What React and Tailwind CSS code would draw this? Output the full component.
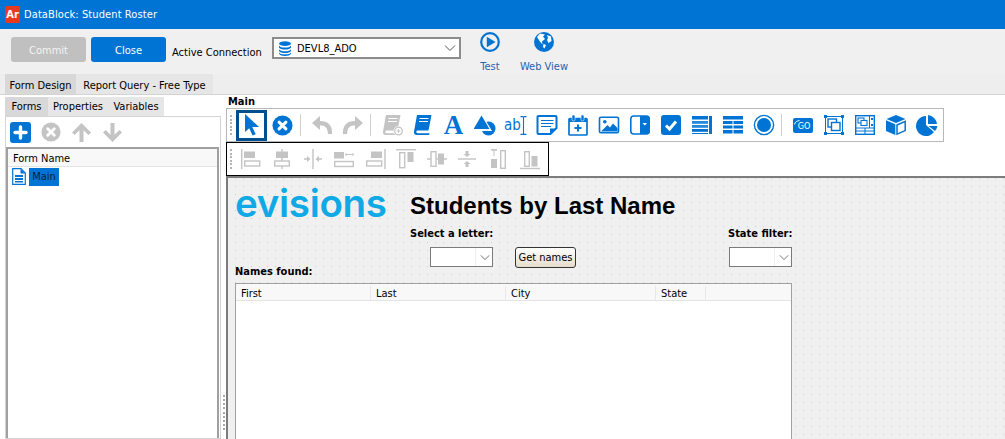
import React from "react";

const BLUE = "#0074d4";
const GRAY = "#c4c4c4";

const Svg = ({ children, size = 22, vb = 22, color = BLUE }) => (
  <svg width={size} height={size} viewBox={`0 0 ${vb} ${vb}`} fill={color} style={{ color }} className="block shrink-0">
    {children}
  </svg>
);

const Db = () => (
  <svg width="12" height="15" viewBox="0 0 12 15" fill={BLUE} className="block">
    <ellipse cx="6" cy="2.6" rx="6" ry="2.4" />
    <path d="M0 4.4C1 6 3 6.6 6 6.6S11 6 12 4.4V6.6C11 8 9 8.6 6 8.6S1 8 0 6.6Z" />
    <path d="M0 8.2C1 9.6 3 10.2 6 10.2S11 9.6 12 8.2V10C11 11.4 9 12 6 12S1 11.4 0 10Z" />
    <path d="M0 11.4C1 12.8 3 13.3 6 13.3S11 12.8 12 11.4V12.8C11 14.2 9 15 6 15S1 14.2 0 12.8Z" />
  </svg>
);

const Chevron = ({ w = 12, h = 6, c = "#555" }) => (
  <svg width={w} height={h} viewBox="0 0 12 6" fill="none" stroke={c} strokeWidth="1" className="block">
    <path d="M1 0.5L6 5.5L11 0.5" />
  </svg>
);

const Grip = () => (
  <div className="flex h-[20px] w-[2px] shrink-0 flex-col justify-between">
    {[0, 1, 2, 3, 4, 5].map((i) => (
      <span key={i} className="block h-[2px] w-[2px] bg-[#b4b4b4]" />
    ))}
  </div>
);

const Sep = () => (
  <div className="flex h-full w-[8px] shrink-0 items-center pl-[2px]">
    <span className="block h-[22px] w-px bg-[#d0d0d0]" />
  </div>
);

const Btn = ({ children, active }) => (
  <div className={`flex h-[31px] w-[31px] shrink-0 items-center justify-center ${active ? "border-[3px] border-[#00508f]" : ""}`}>
    {children}
  </div>
);

const XCircle = ({ color = BLUE, s = 21 }) => (
  <Svg size={s} color={color}>
    <circle cx="11" cy="11" r="10.5" />
    <path d="M7.4 7.4L14.6 14.6M14.6 7.4L7.4 14.6" stroke="#fff" strokeWidth="3.2" strokeLinecap="round" />
  </Svg>
);

const Undo = ({ flip }) => (
  <svg width="22" height="20" viewBox="0 0 22 20" fill={GRAY} className="block" style={flip ? { transform: "scaleX(-1)" } : undefined}>
    <path d="M9 1L1 8L9 15V10.5C14 10.5 16.5 12 17 19H21C21.5 10 17 6 9 6Z" />
  </svg>
);

const Book = ({ color = BLUE, plus }) => (
  <Svg color={color} size={22}>
    <path d="M5 1H19.5L16.5 16.5H6C5 16.5 4.4 17 4.3 17.8C4.2 18.7 4.8 19.2 6 19.2H17.5L17.2 21H5C2.6 21 1.6 19.6 2 17.5Z" />
    <path d="M7.5 4.5H16.5M7 7.5H16" stroke="#fff" strokeWidth="1.2" fill="none" />
    {plus && (
      <>
        <circle cx="17.5" cy="17" r="5" fill="#fff" />
        <circle cx="17.5" cy="17" r="3.8" fill="none" stroke={color} strokeWidth="1.3" />
        <path d="M15.7 17H19.3M17.5 15.2V18.8" stroke={color} strokeWidth="1.1" />
      </>
    )}
  </Svg>
);

const Shapes = () => (
  <Svg>
    <circle cx="14.5" cy="14.5" r="7" />
    <path d="M7.5 -0.5L18 17H-3Z" fill="#fff" />
    <path d="M7.5 1.5L15.5 15H-.5Z" />
  </Svg>
);

const AbBeam = () => (
  <div className="flex items-center pt-px">
    <span className="text-[15px] leading-none text-[#0074d4]">ab</span>
    <svg width="7" height="19" viewBox="0 0 7 19" fill="none" stroke={BLUE} strokeWidth="1.1" className="-ml-[1px] block">
      <path d="M.5 .6H2.5C3 .6 3.5 1 3.5 1.6V17.4C3.5 18 3 18.4 2.5 18.4H.5M6.5 .6H4.5C4 .6 3.5 1 3.5 1.6M3.5 17.4C3.5 18 4 18.4 4.5 18.4H6.5" />
    </svg>
  </div>
);

const Note = () => (
  <Svg>
    <path d="M2.5 2H19.5A1 1 0 0 1 20.5 3V14L14.5 20H2.5A1 1 0 0 1 1.5 19V3A1 1 0 0 1 2.5 2Z" fill="none" stroke={BLUE} strokeWidth="2" />
    <path d="M5 6.5H17.5M5 9.5H17.5M5 12.5H15" stroke={BLUE} strokeWidth="1.2" fill="none" />
    <path d="M14 20V14.5H20Z" />
  </Svg>
);

const Calendar = () => (
  <Svg>
    <path d="M2.8 4.5H19.2A.8.8 0 0 1 20 5.3V20.2A.8.8 0 0 1 19.2 21H2.8A.8.8 0 0 1 2 20.2V5.3A.8.8 0 0 1 2.8 4.5Z" fill="none" stroke={BLUE} strokeWidth="1.7" />
    <path d="M2 5H20V8H2Z" />
    <rect x="5" y="1" width="3" height="6" rx="1.3" stroke="#fff" strokeWidth=".6" />
    <rect x="14" y="1" width="3" height="6" rx="1.3" stroke="#fff" strokeWidth=".6" />
    <path d="M11 10.5V17.5M7.5 14H14.5" stroke={BLUE} strokeWidth="2" />
  </Svg>
);

const ImageIco = () => (
  <Svg>
    <rect x="1.5" y="3.2" width="19" height="15.6" rx="1.5" fill="none" stroke={BLUE} strokeWidth="1.6" />
    <circle cx="6.8" cy="7.8" r="1.8" />
    <path d="M3 17.5L9.5 11L12 13.5L15 9.5L19.5 14V17.5Z" />
  </Svg>
);

const Combo = () => (
  <Svg>
    <rect x="1.8" y="2" width="18.4" height="18" rx="3" fill="none" stroke={BLUE} strokeWidth="1.6" />
    <path d="M11 2H18A3 3 0 0 1 21 5V17A3 3 0 0 1 18 20H11Z" />
    <path d="M13.5 9H18L15.8 11.5Z" fill="#fff" />
  </Svg>
);

const Check = () => (
  <Svg>
    <rect x="1" y="1" width="20" height="20" rx="3" />
    <path d="M6 11.5L9.5 15L16 7.5" fill="none" stroke="#fff" strokeWidth="3" />
  </Svg>
);

const ListIco = () => (
  <Svg>
    <rect x="1" y="2" width="16" height="3.5" />
    <rect x="1" y="7" width="16" height="2.8" opacity=".85" />
    <rect x="1" y="11" width="16" height="2.8" opacity=".85" />
    <rect x="1" y="15" width="16" height="2.8" />
    <rect x="18" y="2" width="3" height="18" />
    <rect x="1" y="19" width="16" height="1" />
  </Svg>
);

const TableIco = () => (
  <Svg>
    <rect x="1" y="2" width="20" height="3.5" />
    <rect x="1" y="7" width="9.5" height="3" />
    <rect x="11.5" y="7" width="9.5" height="3" />
    <rect x="1" y="11.5" width="9.5" height="3" />
    <rect x="11.5" y="11.5" width="9.5" height="3" />
    <rect x="1" y="16" width="9.5" height="3.5" />
    <rect x="11.5" y="16" width="9.5" height="3.5" />
  </Svg>
);

const Radio = () => (
  <Svg>
    <circle cx="11" cy="11" r="9.6" fill="none" stroke={BLUE} strokeWidth="1.4" />
    <circle cx="11" cy="11" r="7" />
  </Svg>
);

const GoIco = () => (
  <div className="relative flex h-[15px] w-[20px] items-center justify-center rounded-[2px] bg-[#0074d4] pl-[3px] pt-[2px] text-[9px] leading-none text-white">
    <svg width="6" height="5" viewBox="0 0 6 5" fill="none" stroke="#fff" strokeWidth="1" className="absolute left-[1px] top-[2px] block">
      <path d="M.5 4.5C1 2 3 .8 5.5 .6" />
    </svg>
    GO
  </div>
);

const Frame = () => (
  <Svg>
    <rect x="2.5" y="2.5" width="17" height="17" fill="none" stroke={BLUE} strokeWidth="1" />
    <rect x="1" y="1" width="3" height="3" />
    <rect x="18" y="1" width="3" height="3" />
    <rect x="1" y="18" width="3" height="3" />
    <rect x="18" y="18" width="3" height="3" />
    <rect x="5" y="5" width="8.5" height="8" fill="none" stroke={BLUE} strokeWidth="1.4" />
    <rect x="8.5" y="8.5" width="8.5" height="8" fill="#fff" stroke={BLUE} strokeWidth="1.4" />
  </Svg>
);

const Panel = () => (
  <Svg>
    <rect x="1.7" y="1.7" width="18.6" height="18.6" fill="none" stroke={BLUE} strokeWidth="1.4" />
    <path d="M2 14H20M2 17H20M15.5 2V14M11 14V20" stroke={BLUE} strokeWidth="1" fill="none" />
    <rect x="4" y="4" width="6" height="5" fill="none" stroke={BLUE} strokeWidth="1.1" />
    <rect x="7" y="6.5" width="6" height="5" fill="#fff" stroke={BLUE} strokeWidth="1.1" />
    <rect x="17" y="4" width="2" height="2" />
    <rect x="17" y="10" width="2" height="2" />
  </Svg>
);

const Cube = () => (
  <Svg>
    <path d="M11 1L20.5 5L11 9L1.5 5Z" />
    <path d="M1 6.3L10.3 10.3V21L1 17Z" />
    <path d="M12 11L20.2 7.4V16.6L12 20.2Z" fill="none" stroke={BLUE} strokeWidth="1.5" />
  </Svg>
);

const Pie = () => (
  <Svg>
    <path d="M10 2A10 10 0 1 0 18 18L10 11Z" />
    <path d="M12 1A10 10 0 0 1 21 10H12Z" />
    <path d="M12.5 12H21.4A10 10 0 0 1 19 17Z" />
  </Svg>
);

const Arrow = () => (
  <svg width="16" height="22" viewBox="0 0 16 22" fill={BLUE} className="block">
    <path d="M1 0V18L5.2 14.2L8.6 21.5L11.7 20.2L8.3 13H15Z" />
  </svg>
);

const G = ({ children }) => (
  <svg width="22" height="22" viewBox="0 0 22 22" fill={GRAY} stroke="none" className="block">
    {children}
  </svg>
);
const O = (p) => <rect fill="#fff" stroke={GRAY} strokeWidth="1.4" {...p} />;
const AlignIcons = [
  <G key="1"><rect x="1" y="1" width="1.4" height="20" /><rect x="4" y="3.5" width="11" height="6.5" /><O x="4.7" y="13" width="15" height="5" /></G>,
  <G key="2"><rect x="10.3" y="1" width="1.4" height="20" /><rect x="5" y="3.5" width="12" height="6.5" /><O x="3.7" y="13" width="14.6" height="5" /></G>,
  <G key="3"><rect x="10.3" y="1" width="1.4" height="20" /><path d="M2 10.3H5V8L8.5 11L5 14V11.7H2Z" /><path d="M20 10.3H17V8L13.5 11L17 14V11.7H20Z" /></G>,
  <G key="4"><rect x="1" y="4" width="10" height="6.5" /><path d="M13 6.5H20M13 5V8M20 5V8" stroke={GRAY} fill="none" /><O x="1.7" y="13.5" width="18.6" height="5" /></G>,
  <G key="5"><rect x="20.3" y="1" width="1.4" height="20" /><rect x="7" y="3.5" width="11" height="6.5" /><O x="2.7" y="13" width="15" height="5" /></G>,
  <G key="6"><rect x="1" y="1" width="20" height="1.4" /><O x="4.7" y="4.7" width="5" height="15" /><rect x="12.5" y="4" width="6" height="10" /></G>,
  <G key="7"><rect x="1" y="10.3" width="20" height="1.4" /><O x="5" y="3.7" width="5" height="14.6" /><rect x="12" y="5.5" width="6" height="11" /></G>,
  <G key="8"><rect x="1" y="10.3" width="18" height="1.4" /><path d="M8.5 3V6H6.5L10 9L13.5 6H11.5V3Z" /><path d="M8.5 19V16H6.5L10 13L13.5 16H11.5V19Z" /></G>,
  <G key="9"><path d="M4 2H9M6 2V8" stroke={GRAY} fill="none" /><rect x="3" y="11" width="6" height="9" /><O x="12.7" y="2.7" width="4.6" height="17.6" /><rect x="3" y="1" width="6" height="1.4" /></G>,
  <G key="10"><rect x="1" y="19.8" width="20" height="1.4" /><O x="5.7" y="3.7" width="4.6" height="14.6" /><rect x="12.5" y="8" width="6" height="10.5" /></G>,
];

const Drop = ({ className }) => (
  <div className={`absolute flex h-[20px] w-[63px] border border-[#7a7a7a] bg-white ${className}`}>
    <div className="m-px w-[42px] bg-white" />
    <div className="flex flex-1 items-center justify-center border-l border-[#efefef] pl-[2px]">
      <Chevron w={10} h={5} />
    </div>
  </div>
);

export default function App() {
  const ui = "[font-family:'DejaVu_Sans_Condensed','DejaVu_Sans',sans-serif]";
  return (
    <div className={`flex h-[439px] w-[1005px] flex-col overflow-hidden bg-white text-[11px] leading-none text-black ${ui}`}>
      {/* Title bar */}
      <div className="flex h-[29px] shrink-0 items-center bg-[#0074d4] pl-[5px] text-white">
        <div className="flex h-[17px] w-[15px] items-center justify-center rounded-[2px] bg-[#e8391c] text-[11px] font-bold">Ar</div>
        <span className="ml-[4px] text-[11px] tracking-[0.1px]">DataBlock: Student Roster</span>
      </div>

      {/* Top action bar */}
      <div className="flex h-[45px] shrink-0 items-start bg-[#f0f0f0] pl-[11px] pt-[8px]">
        <button className="h-[25px] w-[75px] rounded-[3px] bg-[#c0c0c0] pt-[2px] text-[#f4f4f4]">Commit</button>
        <button className="ml-[5px] h-[25px] w-[75px] rounded-[3px] bg-[#0074d4] pt-[2px] text-white">Close</button>
        <span className="ml-[6px] mt-[10px] w-[87px] shrink-0 whitespace-nowrap">Active Connection</span>
        <div className="ml-[13px] flex h-[22px] w-[189px] items-center justify-between border-[2px] border-[#8c8c8c] bg-white pl-[5px] pr-[3px]">
          <div className="flex items-center gap-[6px]">
            <Db />
            <span>DEVL8_ADO</span>
          </div>
          <Chevron />
        </div>
        <div className="ml-[17px] -mt-[5px] flex w-[24px] flex-col items-center">
          <svg width="20" height="20" viewBox="0 0 20 20" className="block">
            <circle cx="10" cy="10" r="8.8" fill="none" stroke={BLUE} strokeWidth="2.2" />
            <path d="M6.8 4.8L15.5 10L6.8 15.2Z" fill={BLUE} />
          </svg>
          <span className="mt-[9px] text-[#2a62ac]">Test</span>
        </div>
        <div className="ml-[12px] -mt-[5px] flex w-[60px] flex-col items-center">
          <svg width="20" height="20" viewBox="0 0 20 20" className="block">
            <circle cx="10" cy="10" r="10" fill={BLUE} />
            <path d="M6 1.5L11 2.5L9 4.5L11 7L8 9.5L8.5 12.5L5.5 9L3 5Z" fill="#fff" />
            <path d="M13 3L17 4.5L17.5 9L14.5 11L13 8L14 6Z" fill="#fff" />
            <path d="M9.5 12L12 13L10.5 16.5L9 15Z" fill="#fff" />
          </svg>
          <span className="mt-[9px] text-[#2a62ac]">Web View</span>
        </div>
      </div>

      {/* Outer tabs */}
      <div className="flex h-[21px] shrink-0 border-b border-[#d4d4d4] bg-[#eeeeee] pl-[5px]">
        <div className="flex w-[71px] items-center justify-center bg-[#d8d8d8] pt-[2px]">Form Design</div>
        <div className="flex w-[137px] items-center justify-center bg-[#e6e6e6] pt-[2px]">Report Query - Free Type</div>
      </div>

      {/* Work area */}
      <div className="flex min-h-0 flex-1">
        {/* Left pane */}
        <div className="flex w-[221px] shrink-0 flex-col pl-[5px] pt-[2px]">
          <div className="flex h-[19px] shrink-0">
            <div className="flex w-[43px] items-center justify-center bg-[#d8d8d8]">Forms</div>
            <div className="flex w-[60px] items-center justify-center bg-[#e6e6e6]">Properties</div>
            <div className="flex w-[56px] items-center justify-center bg-[#e6e6e6]">Variables</div>
          </div>
          <div className="flex min-h-0 flex-1 flex-col border border-[#d4d4d4] bg-white">
            <div className="flex h-[30px] shrink-0 items-center gap-[10px] pl-[4px]">
              <div className="flex h-[21px] w-[21px] items-center justify-center rounded-[3px] bg-[#0074d4]">
                <svg width="15" height="15" viewBox="0 0 15 15" fill="none" stroke="#fff" strokeWidth="3.4" strokeLinecap="round" className="block">
                  <path d="M7.5 2V13M2 7.5H13" />
                </svg>
              </div>
              <XCircle color={GRAY} s={20} />
              <svg width="21" height="21" viewBox="0 0 21 21" fill={GRAY} className="block"><path d="M10.5 1L20 10.5L17.4 13L12.5 8.2V20H8.5V8.2L3.6 13L1 10.5Z" /></svg>
              <svg width="21" height="21" viewBox="0 0 21 21" fill={GRAY} className="block"><path d="M10.5 20L20 10.5L17.4 8L12.5 12.8V1H8.5V12.8L3.6 8L1 10.5Z" /></svg>
            </div>
            <div className="mr-px flex min-h-0 flex-1 flex-col border-x-[2px] border-t-[2px] border-[#a0a0a0] bg-white">
              <div className="flex h-[18px] shrink-0 items-center border-b border-[#e4e4e4] bg-[#f8f8f8] pl-[5px] pt-[2px]">Form Name</div>
              <div className="flex h-[19px] items-center pl-[4px]">
                <svg width="14" height="17" viewBox="0 0 14 17" className="block">
                  <path d="M.7.7H9L13.3 5V16.3H.7Z" fill="#fff" stroke={BLUE} strokeWidth="1.2" />
                  <path d="M8.5 1V5.5H13Z" fill={BLUE} />
                  <rect x="3" y="7" width="8" height="2" fill={BLUE} />
                  <rect x="3" y="10" width="8" height="2" fill={BLUE} />
                  <rect x="3" y="13" width="8" height="1.5" fill={BLUE} />
                </svg>
                <span className="ml-[3px] flex h-[18px] w-[30px] items-center justify-center bg-[#0074d4] text-[#06203a]">Main</span>
              </div>
            </div>
          </div>
        </div>

        {/* Splitter */}
        <div className="flex w-[5px] shrink-0 flex-col items-center justify-end pb-[9px] pl-px">
          <div className="flex h-[35px] flex-col justify-between">
            {[0, 1, 2, 3, 4, 5, 6, 7, 8].map((i) => (
              <span key={i} className="block h-[2px] w-[2px] bg-[#a8a8a8]" />
            ))}
          </div>
        </div>

        {/* Right pane */}
        <div className="flex min-w-0 flex-1 flex-col">
          <div className="h-[13px] shrink-0 pl-[2px] text-[11px] font-bold leading-[13px]">Main</div>

          <div className="flex h-[34px] w-[718px] shrink-0 items-center border border-[#b8b8b8] pl-[3px]">
            <div className="w-[6px] shrink-0"><Grip /></div>
            <Btn active><Arrow /></Btn>
            <Btn><XCircle /></Btn>
            <Sep />
            <Btn><Undo /></Btn>
            <Btn><Undo flip /></Btn>
            <Sep />
            <Btn><Book color={GRAY} plus /></Btn>
            <Btn><Book /></Btn>
            <Btn><span className="text-[27px] font-bold leading-none text-[#0074d4] [font-family:'Liberation_Serif',serif]">A</span></Btn>
            <Btn><Shapes /></Btn>
            <Btn><AbBeam /></Btn>
            <Btn><Note /></Btn>
            <Btn><Calendar /></Btn>
            <Btn><ImageIco /></Btn>
            <Btn><Combo /></Btn>
            <Btn><Check /></Btn>
            <Btn><ListIco /></Btn>
            <Btn><TableIco /></Btn>
            <Btn><Radio /></Btn>
            <Sep />
            <Btn><GoIco /></Btn>
            <Btn><Frame /></Btn>
            <Btn><Panel /></Btn>
            <Btn><Cube /></Btn>
            <Btn><Pie /></Btn>
          </div>

          <div className="flex h-[34px] w-[323px] shrink-0 items-center border border-black pl-[3px]">
            <div className="w-[5px] shrink-0"><Grip /></div>
            {AlignIcons.map((icon, i) => (
              <Btn key={i}>{icon}</Btn>
            ))}
          </div>

          {/* Form canvas */}
          <div className="relative min-h-0 flex-1 border-l-2 border-t-2 border-[#7c7c7c] bg-[#f0f0f0] bg-[conic-gradient(at_1px_1px,transparent_75%,#cdcdcd_75%)] bg-[size:8px_8px] bg-[position:7px_0px]">
            <div className="absolute left-[7px] top-[3px] text-[38.5px] font-semibold leading-[44px] tracking-[-0.3px] text-[#0fa9e6] [font-family:'Inter',sans-serif]">evisions</div>
            <div className="absolute left-[182px] top-[15px] text-[24px] font-bold leading-[26px] [font-family:'Liberation_Sans',sans-serif]">Students by Last Name</div>
            <div className="absolute left-[182px] top-[50px] font-bold">Select a letter:</div>
            <Drop className="left-[202px] top-[69px]" />
            <div className="absolute left-[287px] top-[69px] flex h-[21px] w-[61px] items-center justify-center rounded-[3px] border border-[#333] bg-gradient-to-b from-white to-[#e6dccb]">Get names</div>
            <div className="absolute left-[500px] top-[50px] font-bold">State filter:</div>
            <Drop className="left-[501px] top-[69px]" />
            <div className="absolute left-[7px] top-[88px] font-bold">Names found:</div>
            <div className="absolute left-[7px] top-[105px] h-[200px] w-[557px] border border-[#a0a0a0] bg-white">
              <div className="flex h-[17px] border-b border-[#e4e4e4] bg-[#f8f8f8] pt-[2px]">
                <div className="flex w-[135px] items-center border-r border-[#e8e8e8] pl-[5px]">First</div>
                <div className="flex w-[135px] items-center border-r border-[#e8e8e8] pl-[5px]">Last</div>
                <div className="flex w-[150px] items-center border-r border-[#e8e8e8] pl-[5px]">City</div>
                <div className="flex w-[50px] items-center border-r border-[#e8e8e8] pl-[5px]">State</div>
              </div>
            </div>
          </div>
        </div>
      </div>
    </div>
  );
}
